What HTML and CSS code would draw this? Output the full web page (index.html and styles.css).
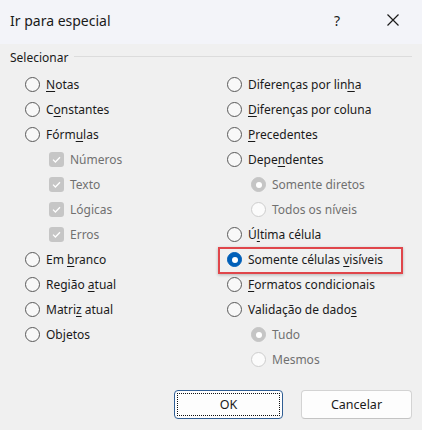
FILE: index.html
```html
<!DOCTYPE html>
<html lang="pt">
<head>
<meta charset="utf-8">
<title>Ir para especial</title>
<link rel="stylesheet" href="styles.css">
</head>
<body>
<div class="window">
  <div class="titlebar">
    <span class="title">Ir para especial</span>
    <span class="help">?</span>
    <span class="close">
      <svg width="14" height="14" viewBox="0 0 14 14"><path d="M1.5 1.5 L12.5 12.5 M12.5 1.5 L1.5 12.5" stroke="#1b1b1b" stroke-width="1.2" fill="none"/></svg>
    </span>
  </div>
  <div class="content">
    <div class="group-head"><span class="group-label">Selecionar</span><span class="group-line"></span></div>
    <div class="cols">
      <div class="col col-left">
        <div class="row"><span class="radio"></span><span class="lbl"><u>N</u>otas</span></div>
        <div class="row"><span class="radio"></span><span class="lbl">C<u>o</u>nstantes</span></div>
        <div class="row"><span class="radio"></span><span class="lbl">Fórm<u>u</u>las</span></div>
        <div class="row sub"><span class="check"><svg width="15" height="15" viewBox="0 0 15 15"><path d="M4 7.6 L6.4 10 L11 5.2" stroke="#fff" stroke-width="1.3" fill="none"/></svg></span><span class="lbl dis">Números</span></div>
        <div class="row sub"><span class="check"><svg width="15" height="15" viewBox="0 0 15 15"><path d="M4 7.6 L6.4 10 L11 5.2" stroke="#fff" stroke-width="1.3" fill="none"/></svg></span><span class="lbl dis">Texto</span></div>
        <div class="row sub"><span class="check"><svg width="15" height="15" viewBox="0 0 15 15"><path d="M4 7.6 L6.4 10 L11 5.2" stroke="#fff" stroke-width="1.3" fill="none"/></svg></span><span class="lbl dis">Lógicas</span></div>
        <div class="row sub"><span class="check"><svg width="15" height="15" viewBox="0 0 15 15"><path d="M4 7.6 L6.4 10 L11 5.2" stroke="#fff" stroke-width="1.3" fill="none"/></svg></span><span class="lbl dis">Erros</span></div>
        <div class="row"><span class="radio"></span><span class="lbl">Em <u>b</u>ranco</span></div>
        <div class="row"><span class="radio"></span><span class="lbl">Região <u>a</u>tual</span></div>
        <div class="row"><span class="radio"></span><span class="lbl">Matri<u>z</u> atual</span></div>
        <div class="row"><span class="radio"></span><span class="lbl">Ob<u>j</u>etos</span></div>
      </div>
      <div class="col col-right">
        <div class="row"><span class="radio"></span><span class="lbl">Diferenças por lin<u>h</u>a</span></div>
        <div class="row"><span class="radio"></span><span class="lbl"><u>D</u>iferenças por coluna</span></div>
        <div class="row"><span class="radio"></span><span class="lbl"><u>P</u>recedentes</span></div>
        <div class="row"><span class="radio"></span><span class="lbl">Depe<u>n</u>dentes</span></div>
        <div class="row sub"><span class="radio dis-on"></span><span class="lbl dis">Somente diretos</span></div>
        <div class="row sub"><span class="radio dis-off"></span><span class="lbl dis">Todos os níveis</span></div>
        <div class="row"><span class="radio"></span><span class="lbl">Ú<u>l</u>tima célula</span></div>
        <div class="row"><span class="radio on"></span><span class="lbl">Somente células <u>v</u>isíveis</span><span class="highlight"></span></div>
        <div class="row"><span class="radio"></span><span class="lbl"><u>F</u>ormatos condicionais</span></div>
        <div class="row"><span class="radio"></span><span class="lbl">Validação de dado<u>s</u></span></div>
        <div class="row sub"><span class="radio dis-on"></span><span class="lbl dis">Tudo</span></div>
        <div class="row sub"><span class="radio dis-off"></span><span class="lbl dis">Mesmos</span></div>
      </div>
    </div>
    <div class="buttons">
      <button class="btn btn-default"><span class="focus">OK</span></button>
      <button class="btn">Cancelar</button>
    </div>
  </div>
</div>
</body>
</html>
```
FILE: styles.css
```css
html, body {
  margin: 0;
  padding: 0;
  background: #f0f0f0;
}
body {
  width: 422px;
  height: 430px;
  overflow: hidden;
  font-family: "Noto Sans", "Open Sans", sans-serif;
  font-size: 12px;
  color: #1a1a1a;
}
.window {
  width: 422px;
  height: 430px;
  background: #f0f0f0;
  display: flex;
  flex-direction: column;
}
.titlebar {
  height: 44px;
  background: #f3f4f9;
  display: flex;
  align-items: center;
  padding-left: 10px;
  flex-shrink: 0;
}
.title {
  font-size: 14px;
  flex: 1;
  padding-bottom: 3px;
}
.help {
  font-size: 14px;
  width: 12px;
  margin-right: 40px;
  padding-bottom: 3px;
}
.close {
  width: 14px;
  height: 14px;
  margin-right: 22px;
  margin-bottom: 4px;
  display: flex;
}
.content {
  flex: 1;
  display: flex;
  flex-direction: column;
  padding: 5px 10px 0 10px;
}
.group-head {
  display: flex;
  align-items: center;
  height: 17px;
}
.group-label {
  padding-right: 6px;
}
.group-line {
  flex: 1;
  height: 1px;
  background: #dcdcdc;
  margin-top: -2px;
}
.cols {
  display: grid;
  grid-template-columns: 202px 1fr;
  padding-left: 15px;
  padding-top: 6px;
}
.col {
  display: flex;
  flex-direction: column;
}
.row {
  height: 25px;
  display: flex;
  align-items: center;
  position: relative;
}
.row.sub {
  padding-left: 24px;
}
.lbl {
  margin-left: 6px;
  white-space: nowrap;
  padding-bottom: 1px;
}
.lbl u {
  text-underline-offset: 2px;
  text-decoration-thickness: 1px;
}
.lbl.dis {
  color: #707070;
}
.radio {
  width: 13px;
  height: 13px;
  border: 1px solid #595959;
  border-radius: 50%;
  background: #f8f8f8;
  flex-shrink: 0;
  position: relative;
}
.radio.on {
  background: #005fb8;
  border-color: #005fb8;
}
.radio.on::after,
.radio.dis-on::after {
  content: "";
  position: absolute;
  left: 3.5px;
  top: 3.5px;
  width: 6px;
  height: 6px;
  border-radius: 50%;
  background: #fff;
}
.radio.dis-on {
  background: #c5c5c5;
  border-color: #c5c5c5;
}
.radio.dis-off {
  background: #fbfbfb;
  border-color: #cdcdcd;
}
.check {
  width: 15px;
  height: 15px;
  border-radius: 3px;
  background: #c6c6c6;
  flex-shrink: 0;
  display: flex;
}
.highlight {
  position: absolute;
  left: -9px;
  top: 0;
  width: 181px;
  height: 23px;
  border: 2px solid #e0464b;
  box-shadow: 0 1px 3px rgba(0,0,0,0.25);
  pointer-events: none;
}
.buttons {
  display: flex;
  justify-content: flex-end;
  gap: 18px;
  margin-top: 18px;
}
.btn {
  font-family: inherit;
  font-size: 12.5px;
  color: #1a1a1a;
  height: 29px;
  width: 111px;
  background: #fdfdfd;
  border: 1px solid #d3d3d3;
  border-bottom-color: #c4c4c4;
  border-radius: 4px;
  padding: 0;
  display: flex;
  align-items: center;
  justify-content: center;
}
.btn-default {
  width: 109px;
  border: 1px solid #2f5d93;
  padding: 2px;
}
.focus {
  flex: 1;
  align-self: stretch;
  border: 1px dotted #111;
  display: flex;
  align-items: center;
  justify-content: center;
}
```
